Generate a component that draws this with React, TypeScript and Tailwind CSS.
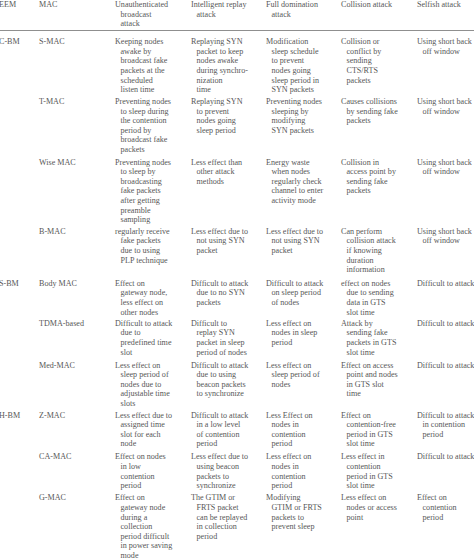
type Row = { eem?: string; mac: string; cells: string[][]; gap: string };

const header: string[][] = [
  ["EEM"],
  ["MAC"],
  ["Unauthenticated", "broadcast", "attack"],
  ["Intelligent replay", "attack"],
  ["Full domination", "attack"],
  ["Collision attack"],
  ["Selfish attack"],
];

const backOff = ["Using short back", "off window"];

const rows: Row[] = [
  {
    eem: "C-BM",
    mac: "S-MAC",
    gap: "pt-[6px]",
    cells: [
      ["Keeping nodes", "awake by", "broadcast fake", "packets at the", "scheduled", "listen time"],
      ["Replaying SYN", "packet to keep", "nodes awake", "during synchro-", "nization", "time"],
      ["Modification", "sleep schedule", "to prevent", "nodes going", "sleep period in", "SYN packets"],
      ["Collision or", "conflict by", "sending", "CTS/RTS", "packets"],
      backOff,
    ],
  },
  {
    mac: "T-MAC",
    gap: "pt-[2.2px]",
    cells: [
      ["Preventing nodes", "to sleep during", "the contention", "period by", "broadcast fake", "packets"],
      ["Replaying SYN", "to prevent", "nodes going", "sleep period"],
      ["Preventing nodes", "sleeping by", "modifying", "SYN packets"],
      ["Causes collisions", "by sending fake", "packets"],
      backOff,
    ],
  },
  {
    mac: "Wise MAC",
    gap: "pt-[3px]",
    cells: [
      ["Preventing nodes", "to sleep by", "broadcasting", "fake packets", "after getting", "preamble", "sampling"],
      ["Less effect than", "other attack", "methods"],
      ["Energy waste", "when nodes", "regularly check", "channel to enter", "activity mode"],
      ["Collision in", "access point by", "sending fake", "packets"],
      backOff,
    ],
  },
  {
    mac: "B-MAC",
    gap: "pt-[2px]",
    cells: [
      ["regularly receive", "fake packets", "due to using", "PLP technique"],
      ["Less effect due to", "not using SYN", "packet"],
      ["Less effect due to", "not using SYN", "packet"],
      ["Can perform", "collision attack", "if knowing", "duration", "information"],
      backOff,
    ],
  },
  {
    eem: "S-BM",
    mac: "Body MAC",
    gap: "pt-[4px]",
    cells: [
      ["Effect on", "gateway node,", "less effect on", "other nodes"],
      ["Difficult to attack", "due to no SYN", "packets"],
      ["Difficult to attack", "on sleep period", "of nodes"],
      ["effect on nodes", "due to sending", "data in GTS", "slot time"],
      ["Difficult to attack"],
    ],
  },
  {
    mac: "TDMA-based",
    gap: "pt-[1.8px]",
    cells: [
      ["Difficult to attack", "due to", "predefined time", "slot"],
      ["Difficult to", "replay SYN", "packet in sleep", "period of nodes"],
      ["Less effect on", "nodes in sleep", "period"],
      ["Attack by", "sending fake", "packets in GTS", "slot time"],
      ["Difficult to attack"],
    ],
  },
  {
    mac: "Med-MAC",
    gap: "pt-[3.4px]",
    cells: [
      ["Less effect on", "sleep period of", "nodes due to", "adjustable time", "slots"],
      ["Difficult to attack", "due to using", "beacon packets", "to synchronize"],
      ["Less effect on", "sleep period of", "nodes"],
      ["Effect on access", "point and nodes", "in GTS slot", "time"],
      ["Difficult to attack"],
    ],
  },
  {
    eem: "H-BM",
    mac: "Z-MAC",
    gap: "pt-[2px]",
    cells: [
      ["Less effect due to", "assigned time", "slot for each", "node"],
      ["Difficult to attack", "in a low level", "of contention", "period"],
      ["Less Effect on", "nodes in", "contention", "period"],
      ["Effect on", "contention-free", "period in GTS", "slot time"],
      ["Difficult to attack", "in contention", "period"],
    ],
  },
  {
    mac: "CA-MAC",
    gap: "pt-[3.4px]",
    cells: [
      ["Effect on nodes", "in low", "contention", "period"],
      ["Less effect due to", "using beacon", "packets to", "synchronize"],
      ["Less effect on", "nodes in", "contention", "period"],
      ["Less effect in", "contention", "period in GTS", "slot time"],
      ["Difficult to attack"],
    ],
  },
  {
    mac: "G-MAC",
    gap: "pt-[2.6px]",
    cells: [
      ["Effect on", "gateway node", "during a", "collection", "period difficult", "in power saving", "mode"],
      ["The GTIM or", "FRTS packet", "can be replayed", "in collection", "period"],
      ["Modifying", "GTIM or FRTS", "packets to", "prevent sleep"],
      ["Less effect on", "nodes or access", "point"],
      ["Effect on", "contention", "period"],
    ],
  },
];

const grid = "grid grid-cols-[40px_76px_76px_75px_75px_76px_1fr]";

function Cell({ lines }: { lines: string[] }) {
  return (
    <div className="whitespace-nowrap">
      {lines.map((line, i) => (
        <div key={i} className={i > 0 ? "pl-[5.5px]" : ""}>
          {line}
        </div>
      ))}
    </div>
  );
}

export default function App() {
  return (
    <div className="h-[559px] w-[474px] overflow-hidden bg-white">
      <div
        className="ml-[-1px] text-[8.1px] leading-[9.6px] text-[#575757]"
        style={{ fontFamily: '"Liberation Serif", "Times New Roman", serif' }}
      >
        <div className={`${grid} pb-[1px]`}>
          {header.map((lines, i) => (
            <Cell key={i} lines={lines} />
          ))}
        </div>
        <div className="h-[1.5px] bg-[#8f8f8f]" />
        {rows.map((row, i) => (
          <div key={i} className={`${grid} ${row.gap}`}>
            <div>{row.eem ?? ""}</div>
            <div>{row.mac}</div>
            {row.cells.map((lines, j) => (
              <Cell key={j} lines={lines} />
            ))}
          </div>
        ))}
      </div>
    </div>
  );
}
